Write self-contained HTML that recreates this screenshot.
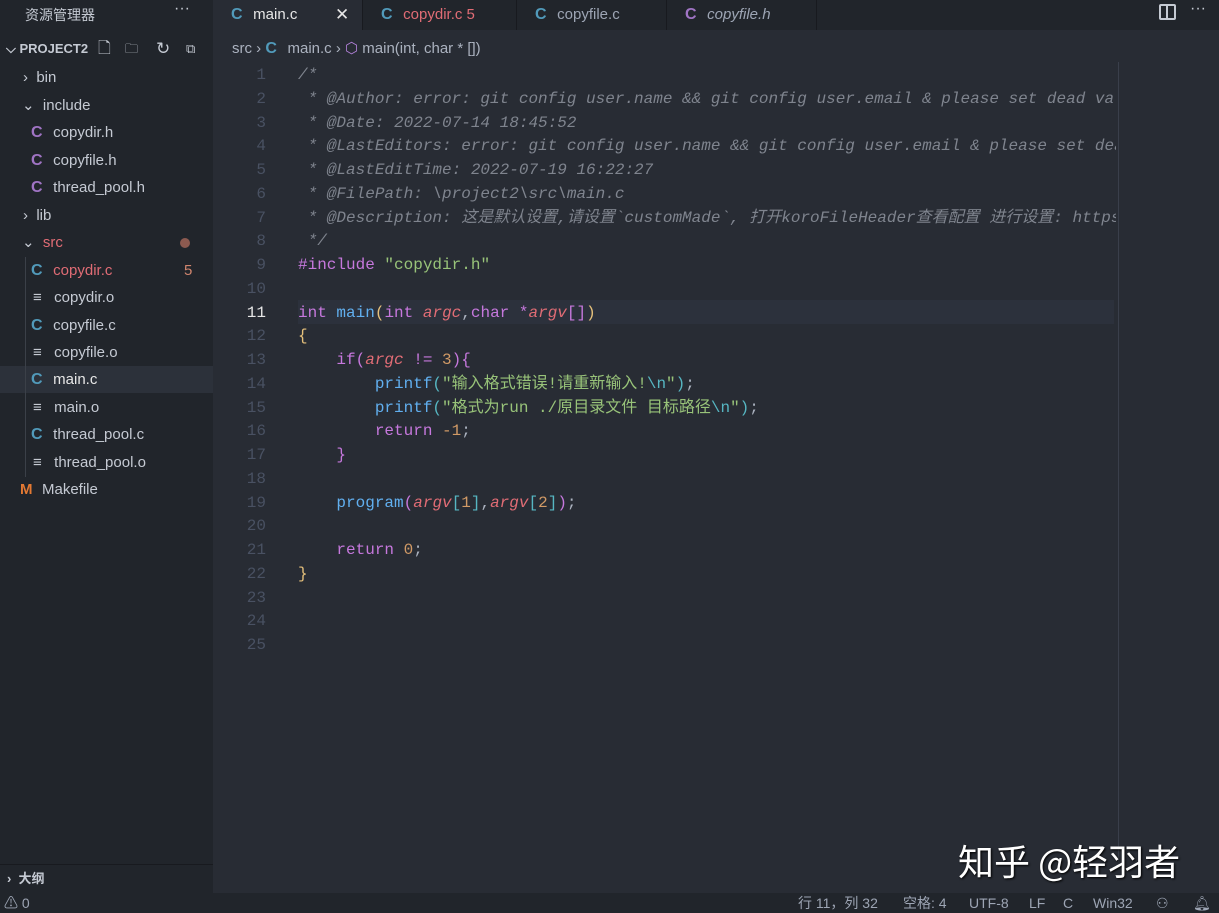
<!DOCTYPE html>
<html><head><meta charset="utf-8"><style>
*{margin:0;padding:0;box-sizing:border-box}
body{width:1219px;height:913px;background:#282c34;font-family:"Liberation Sans","Noto Sans CJK SC",sans-serif;color:#abb2bf;position:relative;overflow:hidden}
.side{position:absolute;left:0;top:0;width:213px;height:893px;background:#21252b}
.row{position:absolute;left:0;width:213px;height:27px;font-size:15px;line-height:27px;color:#c5cad3;white-space:nowrap}
.ci{color:#519aba;font-weight:bold;font-size:16px;display:inline-block;width:18px}
.tabs{position:absolute;left:213px;top:0;width:1006px;height:30px;background:#21252b}
.tab{position:absolute;top:0;height:30px;line-height:30px;font-size:15px;padding-left:18px;border-right:1px solid #181a1f}
.code{position:absolute;top:64px;left:0;font-family:"Liberation Mono","Noto Sans CJK SC",monospace;font-size:16px}
.ln{position:absolute;left:230px;width:36px;text-align:right;color:#495162;height:23.75px;line-height:23.75px}
.cl{position:absolute;left:298px;white-space:pre;height:23.75px;line-height:23.75px;color:#abb2bf}
.cm{color:#7f848e;font-style:italic}.kw{color:#c678dd}.fn{color:#61afef}.st{color:#98c379}.pa{color:#e06c75;font-style:italic}.nu{color:#d19a66}.br{color:#e5c07b}.es{color:#56b6c2}
.status{position:absolute;left:0;top:893px;width:1219px;height:20px;background:#21252b;font-size:14px;line-height:20px;color:#9da5b4}
</style></head><body>
<div class="side">
 <div style="position:absolute;left:25px;top:5px;font-size:14px;color:#c5cad3">资源管理器</div>
 <div style="position:absolute;left:174px;top:0px;font-size:16px;color:#c5cad3">···</div>
 <div class="row" style="top:35px;font-size:13px;font-weight:bold;background:#21252b"><span style="margin-left:6px">⌵</span> PROJECT2
  <span style="position:absolute;left:98px;font-size:16px;font-weight:normal">🗋</span><span style="position:absolute;left:125px;font-weight:normal">🗀</span><span style="position:absolute;left:156px;font-size:17px;font-weight:normal">↻</span><span style="position:absolute;left:186px;font-weight:normal">⧉</span></div>
 <div class="row" style="top:64px"><span style="margin-left:23px">›&nbsp; bin</span></div>
 <div class="row" style="top:92px"><span style="margin-left:22px">⌄&nbsp; include</span></div>
 <div class="row" style="top:119px;padding-left:31px"><span class="ci" style="color:#a074c4">C</span> copydir.h</div>
 <div class="row" style="top:147px;padding-left:31px"><span class="ci" style="color:#a074c4">C</span> copyfile.h</div>
 <div class="row" style="top:174px;padding-left:31px"><span class="ci" style="color:#a074c4">C</span> thread_pool.h</div>
 <div class="row" style="top:202px"><span style="margin-left:23px">›&nbsp; lib</span></div>
 <div class="row" style="top:229px;color:#e06c75"><span style="margin-left:22px"><span style="color:#c5cad3">⌄</span>&nbsp; src</span><span style="position:absolute;left:180px;top:9px;width:10px;height:10px;border-radius:5px;background:#8c5a50"></span></div>
 <div class="row" style="top:257px;padding-left:31px;color:#e06c75"><span class="ci">C</span> copydir.c<span style="position:absolute;left:184px;color:#d0856e">5</span></div>
 <div class="row" style="top:284px;padding-left:33px"><span style="display:inline-block;width:17px">≡</span> copydir.o</div>
 <div class="row" style="top:312px;padding-left:31px"><span class="ci">C</span> copyfile.c</div>
 <div class="row" style="top:339px;padding-left:33px"><span style="display:inline-block;width:17px">≡</span> copyfile.o</div>
 <div class="row" style="top:366px;padding-left:31px;background:#2c313a;color:#e6e6e6"><span class="ci">C</span> main.c</div>
 <div class="row" style="top:394px;padding-left:33px"><span style="display:inline-block;width:17px">≡</span> main.o</div>
 <div class="row" style="top:421px;padding-left:31px"><span class="ci">C</span> thread_pool.c</div>
 <div class="row" style="top:449px;padding-left:33px"><span style="display:inline-block;width:17px">≡</span> thread_pool.o</div>
 <div class="row" style="top:476px;padding-left:20px"><span style="color:#e37933;font-weight:bold;display:inline-block;width:22px">M</span>Makefile</div>
 <div style="position:absolute;left:25px;top:257px;width:1px;height:220px;background:#3b4048"></div>
 <div class="row" style="top:864px;border-top:1px solid #181a1f;font-size:13px;font-weight:bold"><span style="margin-left:7px">›&nbsp; 大纲</span></div>
</div>
<div class="tabs">
 <div class="tab" style="left:0;width:150px;background:#282c34;color:#e6e6e6"><span class="ci">C</span> main.c<span style="position:absolute;left:122px;font-size:17px">✕</span></div>
 <div class="tab" style="left:150px;width:154px;color:#e06c75"><span class="ci">C</span> copydir.c 5</div>
 <div class="tab" style="left:304px;width:150px;color:#9da5b4"><span class="ci">C</span> copyfile.c</div>
 <div class="tab" style="left:454px;width:150px;color:#9da5b4;font-style:italic"><span class="ci" style="color:#a074c4;font-style:normal">C</span> copyfile.h</div>
 <div style="position:absolute;left:946px;top:4px;width:17px;height:16px;border:2px solid #c5cad3;border-radius:2px"><div style="position:absolute;left:5px;top:0;width:2px;height:12px;background:#c5cad3"></div></div>
 <div style="position:absolute;left:977px;top:0;font-size:16px;color:#c5cad3">···</div>
</div>
<div style="position:absolute;left:232px;top:39px;font-size:15px;color:#abb2bf;white-space:nowrap">src › <span class="ci">C</span> main.c › <span style="color:#b180d7">⬡</span> main(int, char * [])</div>
<div style="position:absolute;left:298px;top:300px;width:816px;height:24px;background:#2c313c"></div>
<div style="position:absolute;left:1118px;top:62px;width:1px;height:800px;background:#3a3f4b"></div>
<div class="code">
<div class="ln" style="top:0">1</div><div class="ln" style="top:23.75px">2</div><div class="ln" style="top:47.5px">3</div><div class="ln" style="top:71.25px">4</div><div class="ln" style="top:95px">5</div><div class="ln" style="top:118.75px">6</div><div class="ln" style="top:142.5px">7</div><div class="ln" style="top:166.25px">8</div><div class="ln" style="top:190px">9</div><div class="ln" style="top:213.75px">10</div><div class="ln" style="top:237.5px;color:#e6e6e6">11</div><div class="ln" style="top:261.25px">12</div><div class="ln" style="top:285px">13</div><div class="ln" style="top:308.75px">14</div><div class="ln" style="top:332.5px">15</div><div class="ln" style="top:356.25px">16</div><div class="ln" style="top:380px">17</div><div class="ln" style="top:403.75px">18</div><div class="ln" style="top:427.5px">19</div><div class="ln" style="top:451.25px">20</div><div class="ln" style="top:475px">21</div><div class="ln" style="top:498.75px">22</div><div class="ln" style="top:522.5px">23</div><div class="ln" style="top:546.25px">24</div><div class="ln" style="top:570px">25</div>
<div style="position:absolute;left:0;top:0;width:1116px;height:600px;overflow:hidden">
<div class="cl cm" style="top:0">/*</div>
<div class="cl cm" style="top:23.75px"> * @Author: error: git config user.name &amp;&amp; git config user.email &amp; please set dead value</div>
<div class="cl cm" style="top:47.5px"> * @Date: 2022-07-14 18:45:52</div>
<div class="cl cm" style="top:71.25px"> * @LastEditors: error: git config user.name &amp;&amp; git config user.email &amp; please set dead</div>
<div class="cl cm" style="top:95px"> * @LastEditTime: 2022-07-19 16:22:27</div>
<div class="cl cm" style="top:118.75px"> * @FilePath: \project2\src\main.c</div>
<div class="cl cm" style="top:142.5px"> * @Description: 这是默认设置,请设置`customMade`, 打开koroFileHeader查看配置 进行设置: https</div>
<div class="cl cm" style="top:166.25px"> */</div>
<div class="cl" style="top:190px"><span class="kw">#include</span> <span class="st">"copydir.h"</span></div>
<div class="cl" style="top:237.5px"><span class="kw">int</span> <span class="fn">main</span><span class="br">(</span><span class="kw">int</span> <span class="pa">argc</span>,<span class="kw">char</span> <span class="kw">*</span><span class="pa">argv</span><span class="kw">[]</span><span class="br">)</span></div>
<div class="cl" style="top:261.25px"><span class="br">{</span></div>
<div class="cl" style="top:285px">    <span class="kw">if</span><span class="kw">(</span><span class="pa">argc</span> <span class="kw">!=</span> <span class="nu">3</span><span class="kw">){</span></div>
<div class="cl" style="top:308.75px">        <span class="fn">printf</span><span class="es">(</span><span class="st">"输入格式错误!请重新输入!<span class="es">\n</span>"</span><span class="es">)</span>;</div>
<div class="cl" style="top:332.5px">        <span class="fn">printf</span><span class="es">(</span><span class="st">"格式为run ./原目录文件 目标路径<span class="es">\n</span>"</span><span class="es">)</span>;</div>
<div class="cl" style="top:356.25px">        <span class="kw">return</span> <span class="nu">-1</span>;</div>
<div class="cl" style="top:380px">    <span class="kw">}</span></div>
<div class="cl" style="top:427.5px">    <span class="fn">program</span><span class="kw">(</span><span class="pa">argv</span><span class="es">[</span><span class="nu">1</span><span class="es">]</span>,<span class="pa">argv</span><span class="es">[</span><span class="nu">2</span><span class="es">]</span><span class="kw">)</span>;</div>
<div class="cl" style="top:475px">    <span class="kw">return</span> <span class="nu">0</span>;</div>
<div class="cl" style="top:498.75px"><span class="br">}</span></div>
</div></div>
<div style="position:absolute;left:958px;top:838px;font-size:36px;color:#fff;text-shadow:1px 1px 2px #000;font-family:'Noto Sans CJK SC',sans-serif;line-height:44px">知乎 @轻羽者</div>
<div class="status">
 <span style="position:absolute;left:4px">⚠ 0</span>
 <span style="position:absolute;left:798px">行 11，列 32</span>
 <span style="position:absolute;left:903px">空格: 4</span>
 <span style="position:absolute;left:969px">UTF-8</span>
 <span style="position:absolute;left:1029px">LF</span>
 <span style="position:absolute;left:1063px">C</span>
 <span style="position:absolute;left:1093px">Win32</span>
 <span style="position:absolute;left:1156px">⚇</span>
 <span style="position:absolute;left:1193px">🔔︎</span>
</div>
</body></html>
